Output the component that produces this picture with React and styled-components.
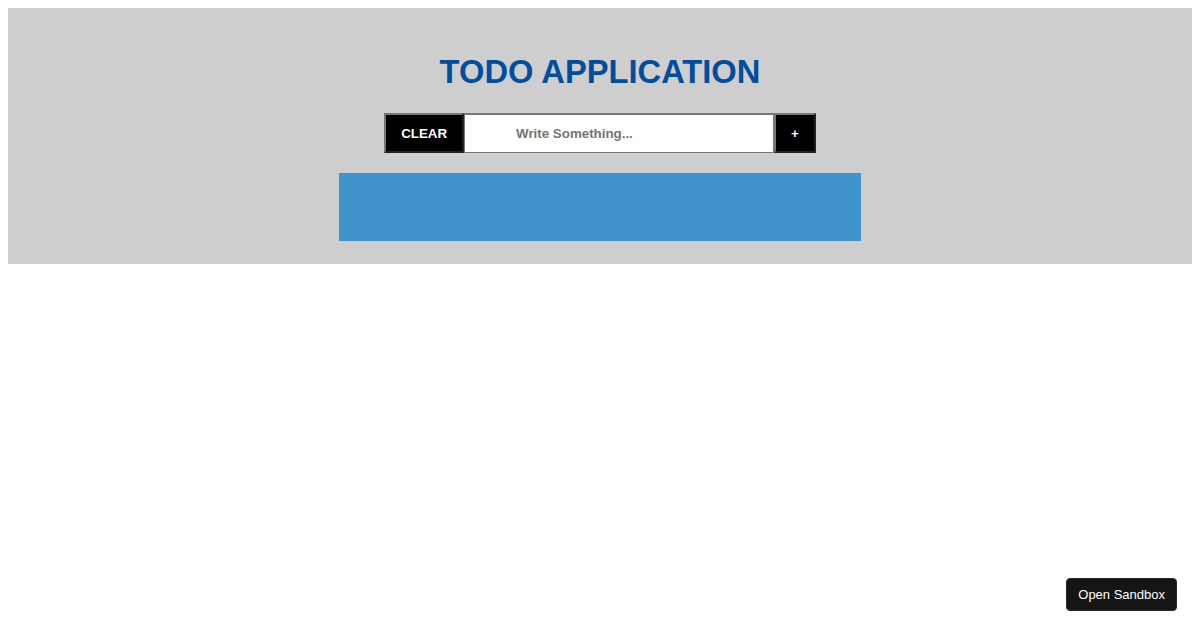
import React, { useState } from "react";
import styled, { createGlobalStyle } from "styled-components";

const GlobalStyle = createGlobalStyle`
  body {
    margin: 8px;
    background: #fff;
    font-family: "Liberation Sans", Arial, sans-serif;
  }
`;

const Panel = styled.div`
  background: #cecece;
  padding: 45px 0 23px;
  display: flex;
  flex-direction: column;
  align-items: center;
`;

const Title = styled.h1`
  margin: 0;
  font-size: 32.7px;
  line-height: 38px;
  font-weight: bold;
  color: #004e9c;
`;

const InputRow = styled.div`
  display: flex;
  margin-top: 22px;
  height: 40px;
`;

const BlackBtn = styled.button`
  background: #000;
  color: #fff;
  font-family: "Liberation Sans", Arial, sans-serif;
  font-size: 13.33px;
  font-weight: bold;
  border: 2px outset #767676;
  padding: 0 ${(p) => p.$pad || 15}px;
  height: 40px;
  cursor: pointer;
`;

const TodoInput = styled.input`
  box-sizing: border-box;
  width: 310px;
  height: 40px;
  border: 1px solid #767676;
  border-top-width: 2px;
  padding: 0 10px 0 51px;
  font-family: "Liberation Sans", Arial, sans-serif;
  font-size: 13.33px;
  font-weight: bold;
  outline: none;

  ::placeholder {
    color: #757575;
  }
`;

const ListBox = styled.div`
  margin-top: 20px;
  width: 522px;
  height: 68px;
  background: #4194cb;
`;

const SandboxBtn = styled.a`
  position: fixed;
  right: 23px;
  bottom: 19px;
  background: #151515;
  color: #fff;
  font-family: "Liberation Sans", Arial, sans-serif;
  font-size: 13px;
  border-radius: 4px;
  padding: 0 11px;
  height: 33px;
  display: flex;
  align-items: center;
  text-decoration: none;
  border: 1px solid #2a2a2a;
  box-sizing: border-box;
`;

const App = () => {
  const [text, setText] = useState("");

  return (
    <>
      <GlobalStyle />
      <Panel>
        <Title>TODO APPLICATION</Title>
        <InputRow>
          <BlackBtn type="button" onClick={() => setText("")}>
            CLEAR
          </BlackBtn>
          <TodoInput
            placeholder="Write Something..."
            value={text}
            onChange={(e) => setText(e.target.value)}
          />
          <BlackBtn type="button" $pad={15}>
            +
          </BlackBtn>
        </InputRow>
        <ListBox />
      </Panel>
      <SandboxBtn href="#">Open Sandbox</SandboxBtn>
    </>
  );
};

export default App;
